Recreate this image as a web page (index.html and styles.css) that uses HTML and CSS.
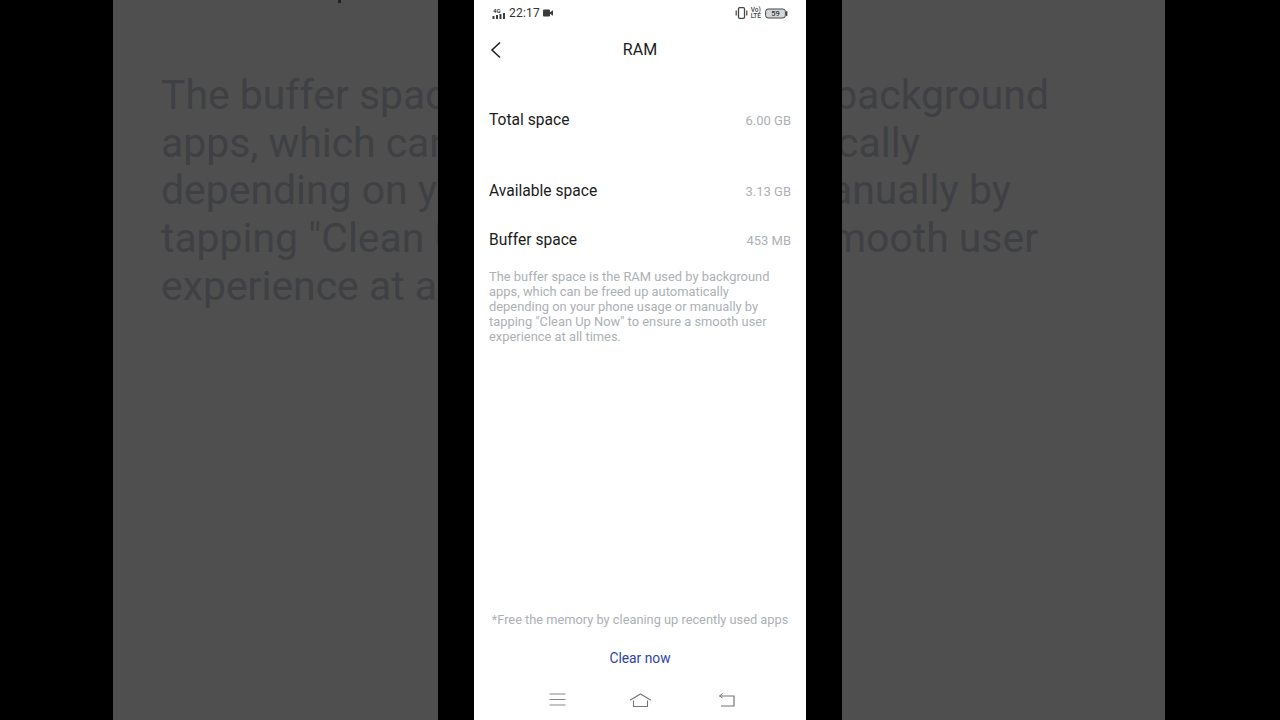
FILE: index.html
```html
<!DOCTYPE html>
<html lang="en">
<head>
<meta charset="utf-8">
<title>RAM</title>
<link rel="stylesheet" href="styles.css">
</head>
<body>
<div class="stage">
  <div class="pane pane-left">
    <span class="speck"></span>
    <p class="pane-line">The buffer space</p>
    <p class="pane-line">apps, which can</p>
    <p class="pane-line">depending on your</p>
    <p class="pane-line">tapping "Clean Up</p>
    <p class="pane-line">experience at all</p>
  </div>
  <main class="phone">
    <div class="status">
      <div class="status-left">
        <svg class="sig" width="15" height="13" viewBox="0 0 15 13"><text x="1" y="5.5" class="sig-text">4G</text><g fill="#3a3a3a"><rect x="0.5" y="9" width="2" height="3"/><rect x="4" y="8" width="2" height="4"/><rect x="7.5" y="7" width="2" height="5"/><rect x="11" y="6" width="2" height="6"/></g></svg>
        <span class="clock">22:17</span>
        <svg width="10" height="8" viewBox="0 0 10 8"><rect x="0" y="0.5" width="7" height="7" rx="1" fill="#3a3a3a"/><path d="M7 3.2 10 1.2V6.8L7 4.8Z" fill="#3a3a3a"/></svg>
      </div>
      <div class="status-right">
        <svg width="13" height="12" viewBox="0 0 13 12" fill="none" stroke="#444"><rect x="3.5" y="0.7" width="6" height="10.6" rx="1.2" stroke-width="1.3"/><path d="M1.2 3.5V8.5M11.8 3.5V8.5" stroke-width="1.2"/></svg>
        <span class="volte">Vo)<br>LTE</span>
        <svg width="23" height="11" viewBox="0 0 23 11"><rect x="0.6" y="1" width="19.8" height="9" rx="2.6" fill="#d4d7da" stroke="#444" stroke-width="1"/><path d="M21.7 3.6V7.4" stroke="#444" stroke-width="1.4" stroke-linecap="round"/><text x="10.5" y="8.4" text-anchor="middle" class="batt">59</text></svg>
      </div>
    </div>
    <header class="title-bar">
      <svg class="back" width="12" height="18" viewBox="0 0 12 18" fill="none"><path d="M10 1.5 2 9l8 7.5" stroke="#222" stroke-width="1.6"/></svg>
      <h1 class="title">RAM</h1>
    </header>
    <section class="rows">
      <div class="row row-total"><span class="label">Total space</span><span class="value">6.00 GB</span></div>
      <div class="row row-avail"><span class="label">Available space</span><span class="value">3.13 GB</span></div>
      <div class="row row-buffer"><span class="label">Buffer space</span><span class="value">453 MB</span></div>
    </section>
    <p class="note">The buffer space is the RAM used by background apps, which can be freed up automatically depending on your phone usage or manually by tapping "Clean Up Now" to ensure a smooth user experience at all times.</p>
    <div class="foot">
      <p class="hint">*Free the memory by cleaning up recently used apps</p>
      <a class="clear">Clear now</a>
    </div>
    <nav class="navbar">
      <svg width="17" height="13" viewBox="0 0 17 13" stroke="#8a8a8a" stroke-width="1.2"><path d="M0.5 1h16M0.5 6.5h16M0.5 12h16"/></svg>
      <svg width="23" height="15" viewBox="0 0 23 15" fill="none" stroke="#777" stroke-width="1.1"><path d="M1 7.2 11.5 1 22 7.2"/><path d="M4.5 7.5V13.5H18.5V7.5"/></svg>
      <svg width="17" height="14" viewBox="0 0 17 14" fill="none" stroke="#777" stroke-width="1.2"><path d="M1.5 3H16V13H3"/><path d="M4.5 0.5 1.5 3l3 2" stroke-width="1"/></svg>
    </nav>
  </main>
  <div class="pane pane-right">
    <p class="pane-line end-1">background</p>
    <p class="pane-line end-2">cally</p>
    <p class="pane-line end-3">anually by</p>
    <p class="pane-line end-4">mooth user</p>
  </div>
</div>
</body>
</html>
```
FILE: styles.css
```css
* { box-sizing: border-box; }
html, body { margin: 0; height: 100%; background: #000; overflow: hidden; }
body { font-family: Roboto, "Liberation Sans", sans-serif; }
.stage { width: 1280px; height: 720px; background: #000; display: flex; padding-left: 113px; }
.pane { position: relative; height: 720px; background: #4f4f4f; overflow: hidden; padding-top: 72px; flex: none; }
.pane-left { width: 325px; padding-left: 48px; margin-right: 36px; }
.pane-right { width: 323px; margin-left: 36px; }
.pane-line { margin: 0; height: 47.7px; font-size: 40.9px; line-height: 47.7px; color: #3e4043; white-space: nowrap; display: flex; }
.pane-right .pane-line { justify-content: flex-end; }
.end-1 { padding-right: 116px; }
.end-2 { padding-right: 245px; }
.end-3 { padding-right: 154px; }
.end-4 { padding-right: 127px; }
.speck { position: absolute; left: 225px; top: 0; width: 3px; height: 3px; background: #222; }
.phone { width: 332px; height: 720px; flex: none; background: #fff; display: flex; flex-direction: column; color: #1c1c1c; }
.status { height: 26px; padding: 0 18px 0 18px; display: flex; justify-content: space-between; align-items: center; }
.status-left, .status-right { display: flex; align-items: center; gap: 3px; }
.sig-text { font-size: 6px; font-weight: 700; fill: #3a3a3a; }
.clock { font-size: 12px; color: #333; letter-spacing: 0.2px; margin-left: -1px; }
.volte { font-size: 6.5px; line-height: 6.5px; color: #444; font-weight: 500; text-align: center; margin-right: 1px; }
.batt { font-size: 7.5px; font-weight: 500; fill: #333; font-family: Roboto, sans-serif; }
.title-bar { position: relative; height: 47px; display: flex; align-items: center; justify-content: center; }
.back { position: absolute; left: 16px; top: 15px; }
.title { margin: 0; font-size: 16px; font-weight: 400; color: #1c1c1c; }
.rows { display: flex; flex-direction: column; padding: 0 15px; }
.row { display: flex; justify-content: space-between; align-items: center; height: 20px; }
.row-total { margin-top: 37px; }
.row-avail { margin-top: 51px; }
.row-buffer { margin-top: 29px; }
.label { font-size: 15.6px; color: #1c1c1c; }
.value { font-size: 13px; color: #adb1b5; }
.note { margin: 19px 0 0; padding: 0 35px 0 15px; font-size: 12.9px; line-height: 15.1px; color: #adb1b5; }
.foot { margin-top: auto; display: flex; flex-direction: column; align-items: center; }
.hint { margin: 0; font-size: 12.8px; line-height: 16px; color: #adb1b5; white-space: nowrap; }
.clear { margin-top: 22px; font-size: 13.8px; line-height: 16px; color: #2b44a8; }
.navbar { height: 54px; padding: 27px 71px 0 75px; display: flex; justify-content: space-between; align-items: flex-start; }
.navbar svg:nth-child(2) { margin-left: -4px; }
```
